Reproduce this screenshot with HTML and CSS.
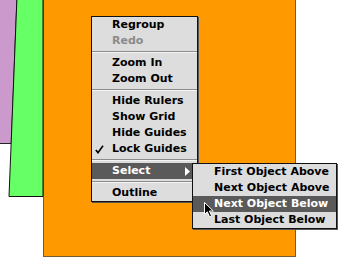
FILE: index.html
```html
<!DOCTYPE html>
<html>
<head>
<meta charset="utf-8">
<link rel="stylesheet" href="styles.css">
</head>
<body>
<div class="canvas">
  <svg class="shapes" width="349" height="268" viewBox="0 0 349 268">
    <rect x="43.5" y="-3" width="252" height="259.5" fill="#ff9900" stroke="#7a5a30" shape-rendering="crispEdges"/>
    <polygon points="-3,-3 17,-3 11.3,143.5 -3,143.5" fill="#cc99cc" stroke="#222"/>
    <polygon points="17,-3 43,-3 43,196.5 9,196.5" fill="#66ff66" stroke="#111"/>
  </svg>

  <div class="menu main">
    <div class="item"><span class="mark"></span><span>Regroup</span></div>
    <div class="item disabled"><span class="mark"></span><span>Redo</span></div>
    <div class="sep"></div>
    <div class="item"><span class="mark"></span><span>Zoom In</span></div>
    <div class="item"><span class="mark"></span><span>Zoom Out</span></div>
    <div class="sep"></div>
    <div class="item"><span class="mark"></span><span>Hide Rulers</span></div>
    <div class="item"><span class="mark"></span><span>Show Grid</span></div>
    <div class="item"><span class="mark"></span><span>Hide Guides</span></div>
    <div class="item"><span class="mark"><svg class="check" width="9" height="9" viewBox="0 0 9 9"><path d="M0.8 5 L3 7.6 L8 0.8" fill="none" stroke="#000" stroke-width="1.6"/></svg></span><span>Lock Guides</span></div>
    <div class="sep"></div>
    <div class="item active"><span class="mark"></span><span>Select</span><svg class="arrow" width="5" height="9" viewBox="0 0 5 9"><polygon points="0,0 5,4.5 0,9" fill="#fff"/></svg></div>
    <div class="sep"></div>
    <div class="item"><span class="mark"></span><span>Outline</span></div>
  </div>

  <div class="menu sub">
    <div class="item"><span>First Object Above</span></div>
    <div class="item"><span>Next Object Above</span></div>
    <div class="item active"><span>Next Object Below</span></div>
    <div class="item"><span>Last Object Below</span></div>
  </div>

  <svg class="cursor" width="13" height="18" viewBox="0 0 13 18">
    <path d="M1.5 1.5 L1.5 13.5 L4.3 10.8 L6.6 15.8 L8.6 14.9 L6.4 10 L10.3 10 Z" fill="#000" stroke="#fff" stroke-width="1"/>
  </svg>
</div>
</body>
</html>
```

FILE: styles.css
```css
html, body {
  margin: 0;
  padding: 0;
  background: #ffffff;
}

.canvas {
  position: relative;
  width: 349px;
  height: 268px;
  overflow: hidden;
  background: #ffffff;
  font-family: "DejaVu Sans", "Verdana", sans-serif;
  font-weight: bold;
  font-size: 11px;
  color: #000;
}

.shapes {
  position: absolute;
  left: 0;
  top: 0;
}

.menu {
  position: absolute;
  box-sizing: border-box;
  background: #dddddd;
  border: 1px solid #111;
  box-shadow: 1px 1px 0 #555;
  display: flex;
  flex-direction: column;
}

.main {
  left: 91px;
  top: 16px;
  width: 107px;
}

.sub {
  left: 192px;
  top: 163px;
  width: 145px;
}

.item {
  height: 16px;
  line-height: 16px;
  display: flex;
  align-items: center;
  white-space: nowrap;
}

.sub .item {
  padding-left: 21px;
}

.item.disabled {
  color: #8a8a8a;
}

.item.active {
  background: #5a5a5a;
  color: #ffffff;
}

.mark {
  width: 20px;
  height: 16px;
  flex: none;
  display: flex;
  align-items: center;
}

.check {
  margin-left: 3px;
  margin-top: 1px;
}

.arrow {
  margin-left: auto;
  margin-right: 7px;
}

.sep {
  height: 6px;
  box-sizing: border-box;
  padding-top: 2px;
}

.sep::before {
  content: "";
  display: block;
  height: 1px;
  background: #8c8c8c;
  border-bottom: 1px solid #f4f4f4;
}

.cursor {
  position: absolute;
  left: 203px;
  top: 201px;
}
```
